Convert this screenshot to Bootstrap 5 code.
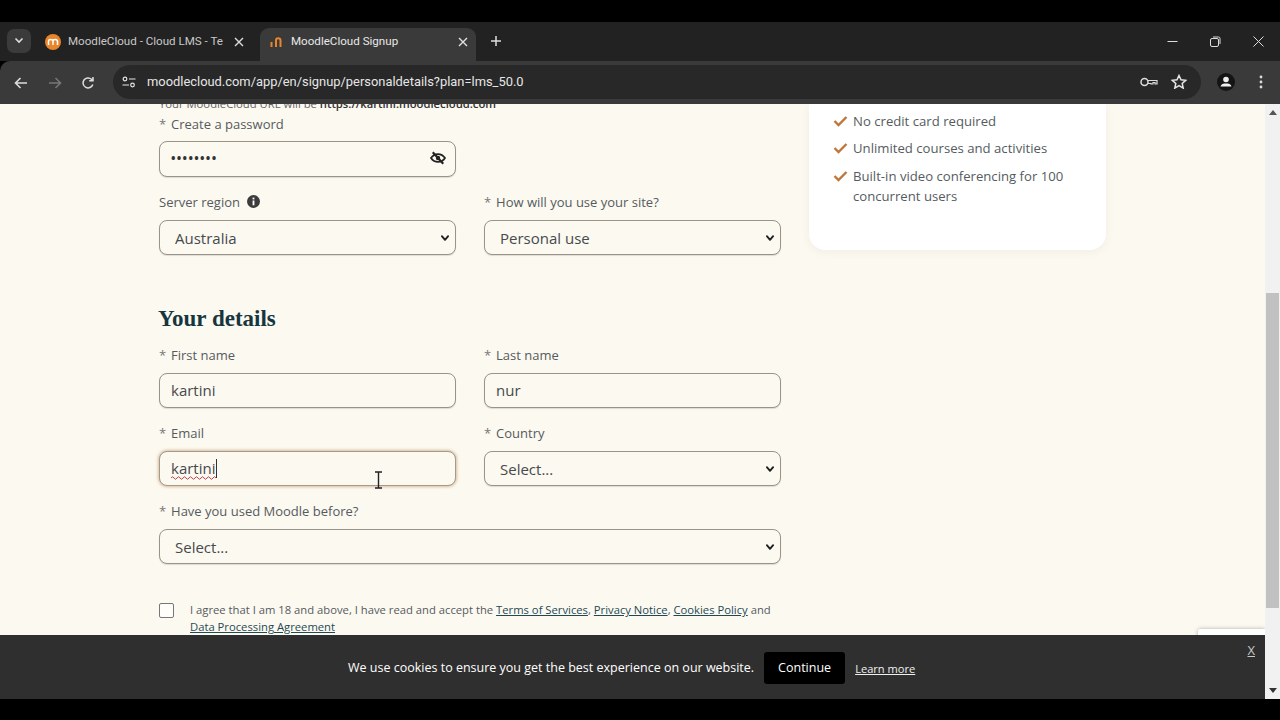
<!DOCTYPE html>
<html lang="en">
<head>
<meta charset="utf-8">
<title>MoodleCloud Signup</title>
<link href="https://cdn.jsdelivr.net/npm/bootstrap@5.3.0/dist/css/bootstrap.min.css" rel="stylesheet">
<style>
html,body{height:720px;overflow:hidden;background:#000;font-family:"Open Sans",sans-serif}
.shell{height:720px;padding:22px 0 21px}
.inner-shell{height:677px}
.tabstrip{height:39px;background:#222;color:#ddd;font-family:Roboto,sans-serif;font-size:11.6px}
.tabmenu{width:24px;height:24px;margin:0 10px 2px 7px;border-radius:7px;background:#3b3b3b}
.chrometab{height:33px;padding:0 8px 6px 0;flex:none}
.chrometab.off{color:#c8c8c8;width:219px}
.chrometab.on{background:#3a3a3a;border-radius:9px 9px 0 0;color:#e8e8e8;padding-left:10px;width:216px}
.tabname{white-space:nowrap;overflow:hidden;flex:1;margin-left:7px}
.winbtn{width:43px}
.toolbar{height:43px;background:#3a3a3a;padding:0 8px 2px 10px;border-radius:10px 0 0 0}
.navbtn{width:33.500px;flex:none}
.omnibox{width:1088px;height:34px;margin-left:2.500px;background:#282828;border-radius:17px;color:#e6e6e6;font-family:Roboto,sans-serif;font-size:12.900px;padding:0 14px 0 9px}
.omnitext{margin-left:11px}
.pagearea{height:595px;overflow:hidden}
.pagemain{flex:1;background:#fcf9f1;position:relative;overflow:hidden;color:#555b5e}
.pagecontent{margin-top:-9px;padding-left:159px}
.formcol{width:622px;flex:none}
.gridrow{--bs-gutter-x:28px;--bs-gutter-y:0}
.urlnote{font-size:11.250px;line-height:18px;color:#666;white-space:nowrap}
.urlnote b{font-weight:600;color:#333}
.fieldlabel{font-size:13px;line-height:18px;margin:0 0 8.500px;color:#555b5e;display:block;height:18px;white-space:nowrap}
.fieldlabel.tight{margin-bottom:7.500px}
.fieldlabel .req{color:#777;margin-right:1.500px}
.fieldgap{margin-bottom:16px}
.field{height:35.500px;min-height:0;border:1.500px solid #9a9388;border-radius:8px;background-color:#fcf9f1;color:#454a4c;font-size:15px;padding:0 11px 1px;box-shadow:0 1px 1px rgba(0,0,0,.12)}
select.field{padding:1px 24px 0 15px;background-position:right 4px center;background-color:#fcf9f1;background-size:12px 10px;--bs-form-select-bg-img:url("data:image/svg+xml,%3csvg xmlns='http://www.w3.org/2000/svg' viewBox='0 0 16 16'%3e%3cpath fill='none' stroke='%23222' stroke-linecap='round' stroke-linejoin='round' stroke-width='3' d='m3 5 5 6 5-6'/%3e%3c/svg%3e")}
.focusfield{border-color:#a39b8c;box-shadow:0 0 3px 1px rgba(190,140,90,.55)}
.dots{height:36.500px;font-size:12px;color:#333;letter-spacing:1.300px;font-weight:700}
.eyewrap{position:relative}
.eye{position:absolute;right:10px;top:10px}
.wavy{position:absolute;left:12px;top:25px}
.caret{position:absolute;left:57px;top:8px;width:1px;height:19px;background:#333}
.sectiontitle{font-family:"Liberation Serif",serif;font-weight:700;font-size:23px;line-height:28px;color:#16363f;margin:50px 0 13px -1px}
.agreerow{margin-top:38px}
.agreebox{width:15px;height:15px;border:1.500px solid #777;border-radius:2px;background:#fffdf9;flex:none;margin:1px 16px 0 0}
.agreetext{font-size:11.250px;line-height:17px;margin-top:-1px;white-space:nowrap;color:#555b5e}
.agreetext a{color:#1f4a55}
.sidecard{width:297px;height:146px;margin-left:28px;margin-top:9px;background:#fff;border-radius:0 0 16px 16px;box-shadow:0 2px 8px rgba(120,100,70,.08);padding:7px 20px 0 24px;font-size:13.150px;color:#555b5e}
.tickrow{display:flex;gap:5px;line-height:20px;margin-bottom:7.300px}
.tickrow svg{flex:none;margin-top:4px;width:15px;height:12px}
.cookiebar{position:absolute;left:0;right:0;bottom:0;height:64px;background:#2f2f2f;color:#fff;font-size:12.500px;padding-left:348px;padding-top:2px}
.cookietext{margin-top:1px}
.continuebtn{background:#000;color:#fff;border:0;border-radius:3px;font-size:12.500px;width:81px;height:32px;padding:0;margin:0 10px}
.learn{font-size:11.100px;color:#f0f0f0;margin-top:2px}
.cookieclose{position:absolute;right:10px;top:7px;font-size:13px;color:#c8c8c8;text-decoration:underline;line-height:16px}
.recap{position:absolute;right:0;bottom:58px;width:67px;height:12px;background:#fff;box-shadow:0 0 4px rgba(0,0,0,.3);border-radius:2px 0 0 0}
.ibeam{position:absolute;left:374px;top:367px}
.sidebar-track{width:15px;background:#f1f1f1;flex:none;position:relative}
.thumb{position:absolute;left:1px;right:1px;top:189px;height:315px;background:#c1c1c1}
.arrowup,.arrowdn{position:absolute;left:4px;width:0;height:0;border-left:4px solid transparent;border-right:4px solid transparent}
.arrowup{top:6px;border-bottom:5px solid #555}
.arrowdn{bottom:6px;border-top:5px solid #333}
</style>
</head>
<body>
<div class="shell">
<div class="inner-shell d-flex flex-column">
  <div class="tabstrip d-flex align-items-end">
    <div class="tabmenu d-flex align-items-center justify-content-center align-self-center">
      <svg width="10" height="7" viewBox="0 0 10 7"><path d="M1.500 1.500 5 5l3.500-3.500" fill="none" stroke="#ddd" stroke-width="1.600"/></svg>
    </div>
    <div class="chrometab off d-flex align-items-center">
      <svg width="16" height="16" viewBox="0 0 16 16" class="ms-1"><circle cx="8" cy="8" r="8" fill="#e8862b"/><path d="M3.500 11V7.500C3.500 6 4.500 5.500 5.500 5.500S8 6 8 7.500V11M8 7.500C8 6 9 5.500 10 5.500S12.500 6 12.500 7.500V11" fill="none" stroke="#fff" stroke-width="1.500"/></svg>
      <span class="tabname">MoodleCloud - Cloud LMS - Te</span>
      <svg width="10" height="10" viewBox="0 0 10 10" style="margin:0 8px 0 8px"><path d="m1 1 8 8M9 1 1 9" stroke="#ddd" stroke-width="1.400"/></svg>
    </div>
    <div class="chrometab on d-flex align-items-center">
      <svg width="14" height="12" viewBox="0 0 14 12"><path d="M1.500 11V6M6 11V4.500C6 3 7 2.300 8.200 2.300S10.500 3 10.500 4.500V11" fill="none" stroke="#e8862b" stroke-width="2"/></svg>
      <span class="tabname" style="margin-left:7px">MoodleCloud Signup</span>
      <svg width="10" height="10" viewBox="0 0 10 10"><path d="m1 1 8 8M9 1 1 9" stroke="#e0e0e0" stroke-width="1.400"/></svg>
    </div>
    <div class="d-flex align-items-center justify-content-center align-self-center" style="width:40px;margin-bottom:2px">
      <svg width="12" height="12" viewBox="0 0 12 12"><path d="M6 1v10M1 6h10" stroke="#ddd" stroke-width="1.500"/></svg>
    </div>
    <div class="ms-auto d-flex align-self-center align-items-center">
      <div class="winbtn text-center"><svg width="11" height="3" viewBox="0 0 11 3"><path d="M.5 1.500h10" stroke="#ddd"/></svg></div>
      <div class="winbtn text-center"><svg width="11" height="11" viewBox="0 0 11 11"><rect x=".5" y="2.500" width="8" height="8" rx="1.500" fill="none" stroke="#ddd"/><path d="M3 1h5.500A1.500 1.500 0 0 1 10 2.500V8" fill="none" stroke="#ddd"/></svg></div>
      <div class="winbtn text-center"><svg width="11" height="11" viewBox="0 0 11 11"><path d="m.5.5 10 10M10.500.5l-10 10" stroke="#ddd"/></svg></div>
    </div>
  </div>
  <div class="toolbar d-flex align-items-center">
    <div class="navbtn"><svg width="14" height="12" viewBox="0 0 14 12" class="ms-1"><path d="M13 6H2M6.500 1 1.500 6l5 5" fill="none" stroke="#ddd" stroke-width="1.600"/></svg></div>
    <div class="navbtn"><svg width="14" height="12" viewBox="0 0 14 12" class="ms-1"><path d="M1 6h11M7.500 1l5 5-5 5" fill="none" stroke="#777" stroke-width="1.600"/></svg></div>
    <div class="navbtn"><svg width="14" height="14" viewBox="0 0 14 14" class="ms-1"><path d="M11.800 8.500A5 5 0 1 1 10.500 3.300L12 4.800M12 1v3.800H8.200" fill="none" stroke="#ddd" stroke-width="1.500"/></svg></div>
    <div class="omnibox d-flex align-items-center">
      <svg width="14" height="12" viewBox="0 0 14 12"><circle cx="3" cy="3" r="1.800" fill="none" stroke="#e6e6e6" stroke-width="1.200"/><path d="M7 3h6.500M.5 9H7" stroke="#e6e6e6" stroke-width="1.200"/><circle cx="10.500" cy="9" r="1.800" fill="none" stroke="#e6e6e6" stroke-width="1.200"/></svg>
      <span class="omnitext">moodlecloud.com/app/en/signup/personaldetails?plan=lms_50.0</span>
      <svg width="18" height="10" viewBox="0 0 18 10" class="ms-auto" style="margin-right:13px"><circle cx="4.500" cy="5" r="3.500" fill="none" stroke="#ddd" stroke-width="1.500"/><path d="M8 3.500h9v3.500h-2V5.500h-2V7h-2V6.500H8" fill="none" stroke="#ddd" stroke-width="1.200"/></svg>
      <svg width="16" height="15" viewBox="0 0 16 15"><path d="m8 1.500 2 4.300 4.700.5-3.500 3.200 1 4.600L8 11.700l-4.200 2.400 1-4.600L1.300 6.300 6 5.800z" fill="none" stroke="#e6e6e6" stroke-width="1.500"/></svg>
    </div>
    <div class="ms-auto d-flex align-items-center">
      <svg width="18" height="18" viewBox="0 0 18 18" style="margin-right:24px"><circle cx="9" cy="9" r="9" fill="#141414"/><circle cx="9" cy="6.500" r="2.800" fill="#eee"/><path d="M3.500 13.500C4 11 6.500 10.500 9 10.500s5 .5 5.500 3z" fill="#eee"/></svg>
      <svg width="4" height="14" viewBox="0 0 4 14" style="margin-right:9px"><circle cx="2" cy="2" r="1.400" fill="#ddd"/><circle cx="2" cy="7" r="1.400" fill="#ddd"/><circle cx="2" cy="12" r="1.400" fill="#ddd"/></svg>
    </div>
  </div>
  <div class="pagearea d-flex">
    <main class="pagemain">
      <div class="pagecontent d-flex align-items-start">
        <div class="formcol">
          <div class="urlnote">Your MoodleCloud URL will be <b>https://kartini.moodlecloud.com</b></div>
          <div class="row gridrow" style="margin-top:2.400px">
            <div class="col-6">
              <label class="fieldlabel tight"><span class="req">*</span> Create a password</label>
              <div class="eyewrap fieldgap">
                <input class="form-control field dots" type="text" value="••••••••" aria-label="Create a password">
                <svg class="eye" width="16" height="14" viewBox="0 0 18 16"><path d="M1 8s3-4.500 8-4.500S17 8 17 8s-3 4.500-8 4.500S1 8 1 8z" fill="none" stroke="#222" stroke-width="2"/><circle cx="9" cy="8" r="2.500" fill="#222"/><path d="M3 1.500 15 14.500" stroke="#222" stroke-width="2.400"/></svg>
              </div>
            </div>
            <div class="col-6"></div>
            <div class="col-6">
              <label class="fieldlabel">Server region <svg width="13" height="13" viewBox="0 0 13 13" class="ms-1" style="vertical-align:-1px"><circle cx="6.500" cy="6.500" r="6.500" fill="#3c3c3c"/><rect x="5.600" y="5.500" width="1.800" height="4.800" fill="#fff"/><rect x="5.600" y="2.600" width="1.800" height="1.800" fill="#fff"/></svg></label>
              <select class="form-select field" aria-label="Server region"><option>Australia</option></select>
            </div>
            <div class="col-6">
              <label class="fieldlabel"><span class="req">*</span> How will you use your site?</label>
              <select class="form-select field" aria-label="How will you use your site?"><option>Personal use</option></select>
            </div>
          </div>
          <h2 class="sectiontitle">Your details</h2>
          <div class="row gridrow">
            <div class="col-6 fieldgap">
              <label class="fieldlabel"><span class="req">*</span> First name</label>
              <input class="form-control field" type="text" value="kartini" aria-label="First name">
            </div>
            <div class="col-6 fieldgap">
              <label class="fieldlabel"><span class="req">*</span> Last name</label>
              <input class="form-control field" type="text" value="nur" aria-label="Last name">
            </div>
            <div class="col-6 fieldgap">
              <label class="fieldlabel"><span class="req">*</span> Email</label>
              <div class="eyewrap">
                <input class="form-control field focusfield" type="text" value="kartini" aria-label="Email">
                <svg class="wavy" width="46" height="4" viewBox="0 0 46 4"><path d="M0 2q1.500-2.500 3 0t3 0 3 0 3 0 3 0 3 0 3 0 3 0 3 0 3 0 3 0 3 0 3 0 3 0 3 0" fill="none" stroke="#c0434a" stroke-width="1"/></svg>
                <span class="caret"></span>
              </div>
            </div>
            <div class="col-6 fieldgap">
              <label class="fieldlabel"><span class="req">*</span> Country</label>
              <select class="form-select field" aria-label="Country"><option>Select...</option></select>
            </div>
            <div class="col-12">
              <label class="fieldlabel"><span class="req">*</span> Have you used Moodle before?</label>
              <select class="form-select field" aria-label="Have you used Moodle before?"><option>Select...</option></select>
            </div>
          </div>
          <div class="agreerow d-flex align-items-start">
            <span class="agreebox"></span>
            <div class="agreetext">I agree that I am 18 and above, I have read and accept the <a href="#">Terms of Services</a>, <a href="#">Privacy Notice</a>, <a href="#">Cookies Policy</a> and<br><a href="#">Data Processing Agreement</a></div>
          </div>
        </div>
        <aside class="sidecard">
          <div class="tickrow"><svg viewBox="0 0 15 12"><path d="m1.500 6 4 4 8-8" fill="none" stroke="#c0763a" stroke-width="2.400"/></svg><span>No credit card required</span></div>
          <div class="tickrow"><svg viewBox="0 0 15 12"><path d="m1.500 6 4 4 8-8" fill="none" stroke="#c0763a" stroke-width="2.400"/></svg><span>Unlimited courses and activities</span></div>
          <div class="tickrow"><svg viewBox="0 0 15 12"><path d="m1.500 6 4 4 8-8" fill="none" stroke="#c0763a" stroke-width="2.400"/></svg><span>Built-in video conferencing for 100 concurrent users</span></div>
        </aside>
      </div>
      <svg class="ibeam" width="9" height="18" viewBox="0 0 9 18"><path d="M1 1h7M1 17h7M4.500 1v16" stroke="#222" stroke-width="1.400" fill="none"/></svg>
      <div class="recap"></div>
      <div class="cookiebar d-flex align-items-center">
        <span class="cookietext">We use cookies to ensure you get the best experience on our website.</span>
        <button class="continuebtn" type="button">Continue</button>
        <a class="learn" href="#">Learn more</a>
        <span class="cookieclose">X</span>
      </div>
    </main>
    <div class="sidebar-track">
      <span class="arrowup"></span>
      <div class="thumb"></div>
      <span class="arrowdn"></span>
    </div>
  </div>
</div>
</div>
<script src="https://cdn.jsdelivr.net/npm/bootstrap@5.3.0/dist/js/bootstrap.bundle.min.js"></script>
</body>
</html>
